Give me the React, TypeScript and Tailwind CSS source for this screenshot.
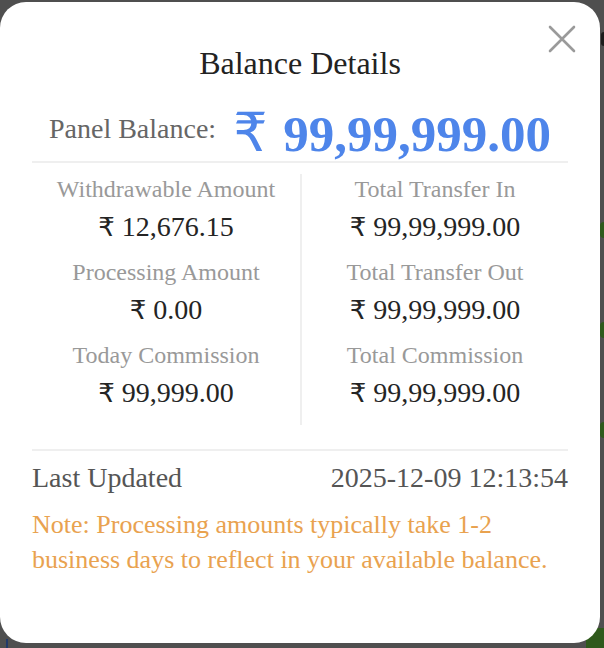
import React from "react";

const SERIF = "font-['Liberation_Serif','Times_New_Roman',serif]";

type Item = { label: string; value: string };

const LEFT: Item[] = [
  { label: "Withdrawable Amount", value: "12,676.15" },
  { label: "Processing Amount", value: "0.00" },
  { label: "Today Commission", value: "99,999.00" },
];

const RIGHT: Item[] = [
  { label: "Total Transfer In", value: "99,99,999.00" },
  { label: "Total Transfer Out", value: "99,99,999.00" },
  { label: "Total Commission", value: "99,99,999.00" },
];

function Rupee({ className = "" }: { className?: string }) {
  return <span className={`font-['DejaVu_Sans',sans-serif] font-normal ${className}`}>₹</span>;
}

function Stat({ item }: { item: Item }) {
  return (
    <div className="flex flex-col items-center">
      <div className="h-[30px] text-[24px] leading-[30px] text-[#999999]">{item.label}</div>
      <div className="mt-[6px] h-[34px] text-[28px] leading-[34px] text-[#242424]">
        <Rupee className="text-[26px]" /> {item.value}
      </div>
    </div>
  );
}

function CloseIcon() {
  return (
    <svg width="28" height="28" viewBox="0 0 28 28" fill="none">
      <path d="M2 2L26 26M26 2L2 26" stroke="#9a9a9a" strokeWidth="2.6" strokeLinecap="round" />
    </svg>
  );
}

export default function App() {
  return (
    <div className={`relative h-[648px] w-[604px] overflow-hidden bg-[#4f4f4f] ${SERIF}`}>
      {/* dimmed page behind the dialog, only slivers show */}
      <div className="flex h-full flex-col items-end">
        <div className="mt-[32px] h-[14px] w-[3px] rounded-l-full bg-[#1c1c1c]" />
        <div className="mt-[176px] h-[16px] w-[4px] rounded-l-full bg-[#2f5a1c]" />
        <div className="mt-[84px] h-[16px] w-[4px] rounded-l-full bg-[#2f5a1c]" />
        <div className="mt-[84px] h-[16px] w-[4px] rounded-l-full bg-[#2f5a1c]" />
        <div className="mt-auto flex w-full items-end justify-between">
          <div className="ml-[6px] h-[9px] w-[8px] border-l-2 border-[#223a6a]" />
          <div className="h-[20px] w-[18px] rounded-tl-[8px] bg-[#2f5a1c]" />
        </div>
      </div>

      <div className="absolute left-0 top-[2px] h-[641px] w-[600px] rounded-[26px] bg-white px-8 pt-[41px]">
        <button className="absolute right-[24px] top-[23px]">
          <CloseIcon />
        </button>

        <h2 className="h-[40px] text-center text-[32px] leading-[40px] text-[#222222]">Balance Details</h2>

        <div className="mt-[22px] flex h-[56px] items-center justify-center gap-[17px]">
          <span className="pb-[9px] text-[28px] leading-[36px] text-[#666666]">Panel Balance:</span>
          <span className="text-[51px] font-bold leading-[56px] text-[#4e85ea]">
            <Rupee className="mr-[3px] text-[54px]" /> 99,99,999.00
          </span>
        </div>

        <div className="border-t-2 border-[#efefef]" />

        <div className="mt-[11px] grid grid-cols-2">
          <div className="flex flex-col gap-[13px] pb-[15px]">
            {LEFT.map((item) => (
              <Stat key={item.label} item={item} />
            ))}
          </div>
          <div className="flex flex-col gap-[13px] border-l-2 border-[#efefef] pb-[15px]">
            {RIGHT.map((item) => (
              <Stat key={item.label} item={item} />
            ))}
          </div>
        </div>

        <div className="mt-[24px] border-t-2 border-[#efefef]" />

        <div className="mt-[10px] flex h-[34px] items-center justify-between text-[28px] leading-[34px] text-[#555555]">
          <span>Last Updated</span>
          <span>2025-12-09 12:13:54</span>
        </div>

        <p className="mt-[12px] text-[26px] leading-[35px] text-[#e9a24f]">
          Note: Processing amounts typically take 1-2 business days to reflect in your available balance.
        </p>
      </div>
    </div>
  );
}
